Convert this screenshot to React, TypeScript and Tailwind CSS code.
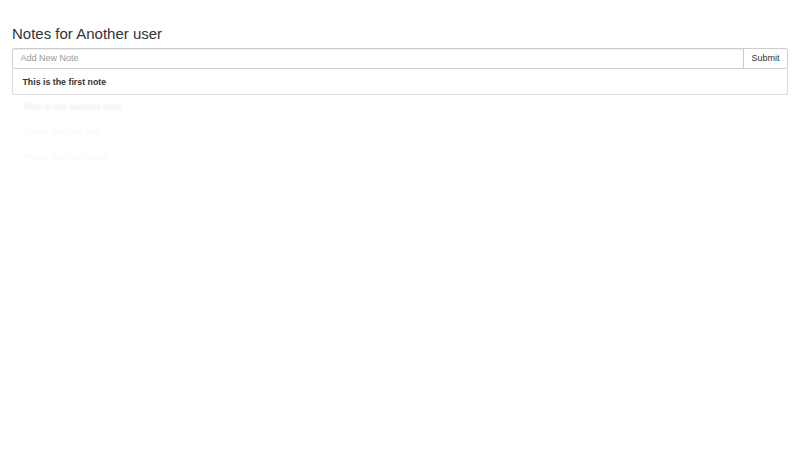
import { useState } from "react";

const notes = [
  "This is the first note",
  "This is the second note",
  "This is the third note",
  "This is the fourth note",
];

export default function App() {
  const [value, setValue] = useState("");

  return (
    <div className="min-h-screen bg-white px-[12px] pt-[25.5px] font-['Liberation_Sans',Arial,sans-serif] text-[#333]">
      <h3 className="mb-[5.5px] text-[15px] leading-[16.5px] font-normal">
        Notes for Another user
      </h3>

      <div className="flex">
        <input
          value={value}
          onChange={(e) => setValue(e.target.value)}
          placeholder="Add New Note"
          className="h-[21px] flex-1 rounded-l-[2.5px] border border-[#ccc] px-[7.5px] text-[9px] text-[#555] shadow-[inset_0_1px_1px_rgba(0,0,0,0.075)] outline-none placeholder:text-[#999]"
        />
        <button className="-ml-px h-[21px] rounded-r-[2.5px] border border-[#ccc] bg-white px-[7.5px] text-[9px] leading-none text-[#333]">
          Submit
        </button>
      </div>

      <ul>
        <li className="h-[26px] rounded-b-[2.5px] border border-t-0 border-[#ddd] px-[9.5px] pt-[7px] text-[8.8px] leading-[12.5px] font-bold">
          {notes[0]}
        </li>
        <li className="h-[25px] w-[315px] border-b border-l border-[#ddd] px-[10.5px] pt-[6.5px] text-[8.8px] leading-[12.5px] font-bold opacity-[0.09] blur-[0.8px]">
          {notes[1]}
        </li>
        {notes.slice(2).map((note) => (
          <li
            key={note}
            className="h-[25px] px-[11px] pt-[6.5px] text-[8.8px] leading-[12.5px] opacity-[0.05] blur-[0.8px]"
          >
            {note}
          </li>
        ))}
      </ul>
    </div>
  );
}
